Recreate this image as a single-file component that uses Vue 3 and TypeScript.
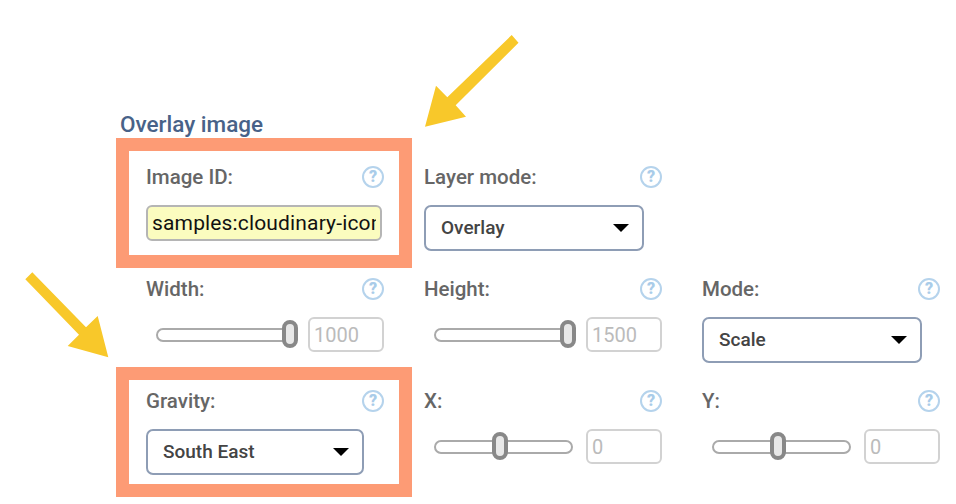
<script setup lang="ts">
interface Field {
  label: string
  kind: 'text' | 'select' | 'slider' | 'empty'
  value?: string
  thumb?: number
  narrow?: boolean
}

const fields: Field[] = [
  { label: 'Image ID:', kind: 'text', value: 'samples:cloudinary-icon' },
  { label: 'Layer mode:', kind: 'select', value: 'Overlay' },
  { label: '', kind: 'empty' },
  { label: 'Width:', kind: 'slider', value: '1000', thumb: 132 },
  { label: 'Height:', kind: 'slider', value: '1500', thumb: 132 },
  { label: 'Mode:', kind: 'select', value: 'Scale' },
  { label: 'Gravity:', kind: 'select', value: 'South East', narrow: true },
  { label: 'X:', kind: 'slider', value: '0', thumb: 64 },
  { label: 'Y:', kind: 'slider', value: '0', thumb: 64 }
]
</script>

<template>
  <main class="page">
    <h2 class="title">Overlay image</h2>
    <section class="grid">
      <div v-for="(f, i) in fields" :key="i" class="field">
        <template v-if="f.kind !== 'empty'">
          <div class="head">
            <label class="label">{{ f.label }}</label>
            <span class="help">?</span>
          </div>
          <input v-if="f.kind === 'text'" class="text" :value="f.value" readonly />
          <div v-else-if="f.kind === 'select'" class="select" :class="{ narrow: f.narrow }">
            <span>{{ f.value }}</span>
            <i class="caret"></i>
          </div>
          <div v-else class="slider">
            <div class="track">
              <span class="thumb" :style="{ left: f.thumb + 'px' }"></span>
            </div>
            <div class="number">{{ f.value }}</div>
          </div>
        </template>
      </div>
    </section>

    <div class="mark mark-top"></div>
    <div class="mark mark-bottom"></div>
    <svg class="arrows" width="956" height="504" viewBox="0 0 956 504">
      <polygon points="511.7,35 518.5,42.7 455.7,105.3 466,116.7 425,126.7 436,85.7 447.3,97.3" fill="#f8c82a" />
      <polygon points="32.3,272.3 25.3,279.3 79,334.7 67.7,346 108.3,357.3 97.7,316 86,327.3" fill="#f8c82a" />
    </svg>
  </main>
</template>

<style scoped>
.page {
  position: relative;
  width: 956px;
  height: 504px;
  overflow: hidden;
  box-sizing: border-box;
  padding: 110px 16px 0 120px;
  background: #fff;
  font-family: Roboto, "Noto Sans", sans-serif;
}
.title {
  margin: 0;
  height: 28px;
  font-size: 22.5px;
  line-height: 28px;
  font-weight: 500;
  color: #486288;
}
.grid {
  display: grid;
  grid-template-columns: repeat(3, 238px);
  grid-auto-rows: 112px;
  column-gap: 40px;
  margin: 27px 0 0 26px;
}
.field {
  display: flex;
  flex-direction: column;
}
.head {
  display: flex;
  align-items: center;
  justify-content: space-between;
  height: 24px;
  margin-bottom: 17px;
}
.label {
  font-size: 20.5px;
  line-height: 24px;
  font-weight: 500;
  color: #666;
}
.help {
  box-sizing: border-box;
  display: flex;
  align-items: center;
  justify-content: center;
  width: 22px;
  height: 22px;
  border: 2px solid #b5d3ec;
  border-radius: 50%;
  font-size: 16px;
  font-weight: 900;
  line-height: 1;
  color: #a9cce9;
}
.text {
  box-sizing: border-box;
  width: 236px;
  height: 36px;
  margin-top: -1px;
  padding: 0 4px;
  border: 2px solid #b5b5b5;
  border-radius: 6px;
  outline: none;
  background: #fbfcbf;
  font-family: inherit;
  font-size: 21px;
  letter-spacing: 0.15px;
  color: #111;
}
.select {
  box-sizing: border-box;
  display: flex;
  align-items: center;
  justify-content: space-between;
  width: 220px;
  height: 46px;
  margin-top: -1px;
  padding: 0 13px 2px 15px;
  border: 2px solid #8e9db5;
  border-radius: 7px;
  font-size: 19px;
  font-weight: 500;
  color: #444;
}
.select.narrow {
  width: 218px;
}
.caret {
  width: 0;
  height: 0;
  margin-top: 2px;
  border-left: 8px solid transparent;
  border-right: 8px solid transparent;
  border-top: 8px solid #000;
}
.slider {
  display: flex;
  align-items: center;
  gap: 13px;
  padding-left: 10px;
  margin-top: -1px;
}
.track {
  position: relative;
  box-sizing: border-box;
  width: 139px;
  height: 14px;
  border: 2.5px solid #aaa;
  border-radius: 7px;
  background: #fff;
}
.thumb {
  position: absolute;
  top: -9.5px;
  box-sizing: border-box;
  width: 16px;
  height: 28px;
  border: 4px solid #888;
  border-radius: 8px;
  background: #e8e8e8;
  margin-left: -8px;
}
.number {
  box-sizing: border-box;
  width: 76px;
  height: 35px;
  padding: 0 4px;
  border: 2px solid #d2d2d2;
  border-radius: 6px;
  font-size: 20px;
  line-height: 32px;
  color: #bbb;
}
.mark {
  position: absolute;
  left: 116px;
  width: 296px;
  height: 130px;
  box-sizing: border-box;
  border: 13.5px solid #fd9b75;
}
.mark-top {
  top: 138px;
}
.mark-bottom {
  top: 366.5px;
}
.arrows {
  position: absolute;
  left: 0;
  top: 0;
  pointer-events: none;
}
</style>
